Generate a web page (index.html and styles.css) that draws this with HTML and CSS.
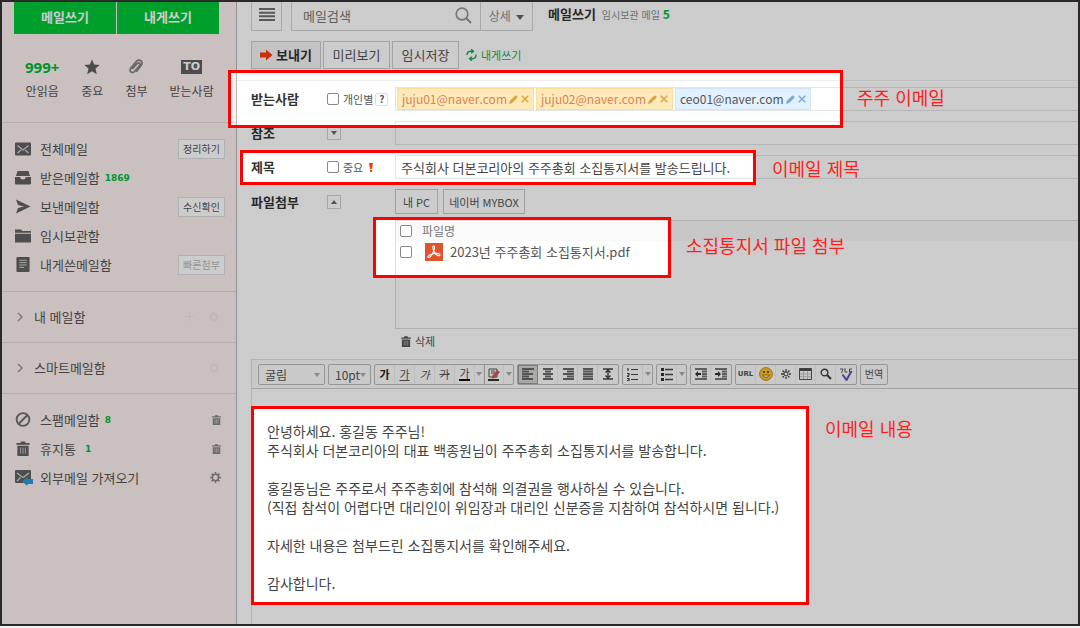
FILE: index.html
```html
<!DOCTYPE html>
<html lang="ko">
<head>
<meta charset="utf-8">
<title>메일쓰기</title>
<link rel="stylesheet" href="styles.css">
</head>
<body>
<svg class="defs" aria-hidden="true">
  <symbol id="trash" viewBox="0 0 14 16"><path d="M0 2h4.500V.5h5V2H14v2H0zM1 5h12v11H1z" fill="currentColor"/><path d="M4.500 7v6.500M7 7v6.500M9.500 7v6.500" stroke="#fff" stroke-opacity=".65" fill="none"/></symbol>
  <symbol id="pencil" viewBox="0 0 10 10"><path d="M0 10l1-3.500L6.500 1q1.200-1 2.400 0t0 2.500L3.500 9z" fill="currentColor"/></symbol>
  <symbol id="cross" viewBox="0 0 8 8"><path d="M.7.7l6.600 6.600M7.300.7L.7 7.300" stroke="currentColor" stroke-width="1.500"/></symbol>
  <symbol id="gear" viewBox="0 0 12 12"><circle cx="6" cy="6" r="3.500" fill="none" stroke="currentColor" stroke-width="1.800"/><path d="M6 0v2M6 10v2M0 6h2M10 6h2M1.800 1.800l1.400 1.400M8.800 8.800l1.400 1.400M1.800 10.200l1.400-1.400M8.800 3.200l1.400-1.400" stroke="currentColor" stroke-width="1.700"/></symbol>
</svg>
<div class="app">
  <aside class="sidebar">
    <div class="write">
      <button class="write-btn" type="button">메일쓰기</button>
      <button class="write-btn" type="button">내게쓰기</button>
    </div>
    <nav class="quick">
      <a href="#" class="quick-item"><b class="quick-num">999+</b><span>안읽음</span></a>
      <a href="#" class="quick-item"><svg width="16" height="16" viewBox="0 0 16 16"><path d="M8 .5l2.200 5 5.500.5-4.200 3.600 1.300 5.600L8 12.200l-4.800 3 1.300-5.600L.3 6l5.500-.5z" fill="#606060"/></svg><span>중요</span></a>
      <a href="#" class="quick-item"><svg width="14" height="16" viewBox="0 0 14 16"><path d="M3.200 10L8.300 4.500q1.300-1 2.200-.1t.1 2.100L5.500 12.500q-1.700 1.800-3.400.6t-.4-3.800L7.600 2.200q2.200-2 4.200-.4t.6 4.200L7.200 12.800" fill="none" stroke="#858585" stroke-width="1.800"/></svg><span>첨부</span></a>
      <a href="#" class="quick-item"><b class="to">TO</b><span>받는사람</span></a>
    </nav>
    <ul class="boxes">
      <li><svg class="ico" viewBox="0 0 16 14"><rect y="1" width="16" height="13" rx="1" fill="#626262"/><path d="M2.500 4L8 8.500 13.500 4M2.500 11.500l3.500-3M13.500 11.500L10 8.500" stroke="#fff" stroke-opacity=".75" fill="none" stroke-width="1.200"/></svg><a href="#">전체메일</a><button type="button" class="mini">정리하기</button></li>
      <li><svg class="ico" viewBox="0 0 16 14"><path d="M2.500.5h11L15 5.500H1zM0 6.500h5q.5 2.500 3 2.500t3-2.500h5V13q0 1-1 1H1q-1 0-1-1z" fill="#626262"/></svg><a href="#">받은메일함</a><b class="num">1869</b></li>
      <li><svg class="ico" viewBox="0 0 16 14"><path d="M1 0l14.500 7L1 14l2-5.500L9 7 3 5.500z" fill="#626262"/></svg><a href="#">보낸메일함</a><button type="button" class="mini">수신확인</button></li>
      <li><svg class="ico" viewBox="0 0 16 14"><path d="M0 1h6l1.500 1.500H16v1.800H0zM0 5.200h16V14H0z" fill="#626262"/></svg><a href="#">임시보관함</a></li>
      <li><svg class="ico" viewBox="0 0 16 16"><rect x="1" width="14" height="16" rx="1" fill="#626262"/><path d="M4 3.500h8M4 6h8M4 8.500h8M4 11h5" stroke="#fff" stroke-opacity=".75"/></svg><a href="#">내게쓴메일함</a><button type="button" class="mini" disabled>빠른첨부</button></li>
    </ul>
    <div class="group"><svg width="6" height="10" viewBox="0 0 6 10"><path d="M1 1l4 4-4 4" fill="none" stroke="#9c9c9c" stroke-width="1.500"/></svg><a href="#">내 메일함</a><span class="faint"><svg width="9" height="9" viewBox="0 0 9 9"><path d="M4.500 0v9M0 4.500h9" stroke="currentColor"/></svg><svg width="10" height="10"><use href="#gear"/></svg></span></div>
    <div class="group"><svg width="6" height="10" viewBox="0 0 6 10"><path d="M1 1l4 4-4 4" fill="none" stroke="#9c9c9c" stroke-width="1.500"/></svg><a href="#">스마트메일함</a><span class="faint"><svg width="10" height="10"><use href="#gear"/></svg></span></div>
    <ul class="boxes">
      <li><svg class="ico" viewBox="0 0 16 16"><circle cx="8" cy="8" r="6.800" fill="none" stroke="#707070" stroke-width="2"/><path d="M3.500 12.500l9-9" stroke="#707070" stroke-width="2"/></svg><a href="#">스팸메일함</a><b class="num">8</b><button type="button" class="act" aria-label="스팸메일함 비우기"><svg width="9" height="10"><use href="#trash"/></svg></button></li>
      <li><svg class="ico dark"><use href="#trash"/></svg><a href="#">휴지통</a><b class="num far">1</b><button type="button" class="act" aria-label="휴지통 비우기"><svg width="9" height="10"><use href="#trash"/></svg></button></li>
      <li><svg class="ico wide" viewBox="0 0 18 16"><rect x="0" y="0" width="16" height="13" rx="1" fill="#626262"/><path d="M2 3l6 4.500L14 3M2 11l3.500-3.500" stroke="#fff" stroke-opacity=".75" fill="none" stroke-width="1.200"/><path d="M7 11.500L12.500 6.500V9H18v5h-5.500v2z" fill="#2c9bde"/></svg><a href="#">외부메일 가져오기</a><button type="button" class="act" aria-label="설정"><svg width="11" height="11"><use href="#gear"/></svg></button></li>
    </ul>
  </aside>

  <main class="main">
    <header class="top">
      <button type="button" class="menu" aria-label="메뉴"><svg width="16" height="13" viewBox="0 0 16 13"><path d="M0 1h16M0 4.700h16M0 8.300h16M0 12h16" stroke="#707070" stroke-width="2"/></svg></button>
      <div class="search">
        <input type="search" class="search-input" placeholder="메일검색" aria-label="메일검색">
        <button type="button" class="search-go" aria-label="검색"><svg width="17" height="17" viewBox="0 0 17 17"><circle cx="7" cy="7" r="5.800" fill="none" stroke="#949494" stroke-width="1.700"/><path d="M11.300 11.300l4.700 4.700" stroke="#949494" stroke-width="2"/></svg></button>
        <button type="button" class="detail">상세 <i class="tri"></i></button>
      </div>
      <h1 class="title">메일쓰기</h1>
      <a href="#" class="draft">임시보관 메일 <b>5</b></a>
    </header>
    <div class="actions">
      <button type="button" class="btn send"><svg width="13" height="12" viewBox="0 0 13 12"><path d="M0 3.500h6V.5L12.500 6 6 11.500v-3H0z" fill="#ff3a10"/></svg>보내기</button>
      <button type="button" class="btn">미리보기</button>
      <button type="button" class="btn">임시저장</button>
      <a href="#" class="tome"><svg width="11" height="12" viewBox="0 0 11 12"><path d="M1 6q0-3.500 3.500-3.800H7M5.200.3L7.500 2.200 5.200 4.300M10 5.500q.3 4-3.500 4.300H4M5.800 7.700L3.500 9.800l2.300 2" fill="none" stroke="#1fae4b" stroke-width="1.400"/></svg>내게쓰기</a>
    </div>
    <form class="form">
      <div class="row">
        <b class="label">받는사람</b>
        <span class="opt"><input type="checkbox" class="check" id="each"><label for="each">개인별</label><button type="button" class="help" aria-label="도움말">?</button></span>
        <div class="field chips">
          <span class="chip">juju01@naver.com<svg width="9" height="9"><use href="#pencil"/></svg><svg width="8" height="8"><use href="#cross"/></svg></span>
          <span class="chip">juju02@naver.com<svg width="9" height="9"><use href="#pencil"/></svg><svg width="8" height="8"><use href="#cross"/></svg></span>
          <span class="chip blue">ceo01@naver.com<svg width="9" height="9"><use href="#pencil"/></svg><svg width="8" height="8"><use href="#cross"/></svg></span>
        </div>
      </div>
      <div class="row">
        <label class="label" for="cc">참조</label>
        <span class="opt"><button type="button" class="fold" aria-label="참조 펼치기"><i class="tri small"></i></button></span>
        <input type="text" class="field" id="cc">
      </div>
      <div class="row">
        <label class="label" for="subject">제목</label>
        <span class="opt"><input type="checkbox" class="check" id="urgent"><label for="urgent" class="urgent">중요 <svg width="4" height="9" viewBox="0 0 4 9"><path d="M0 0h4L3 6H1zM1 7h2v2H1z" fill="#ff3a10"/></svg></label></span>
        <input type="text" class="field" id="subject" value="주식회사 더본코리아의 주주총회 소집통지서를 발송드립니다.">
      </div>
      <div class="row">
        <b class="label">파일첨부</b>
        <span class="opt"><button type="button" class="fold" aria-label="파일첨부 접기"><i class="tri small up"></i></button></span>
        <div class="pick"><button type="button" class="btn file">내 PC</button><button type="button" class="btn file">네이버 MYBOX</button></div>
      </div>
    </form>
    <div class="files">
      <table class="table">
        <thead><tr><th class="c"><input type="checkbox" class="check" aria-label="전체 선택"></th><th>파일명</th></tr></thead>
        <tbody><tr><td class="c"><input type="checkbox" class="check" aria-label="파일 선택"></td><td><span class="doc"><svg width="18" height="18" viewBox="0 0 18 18"><rect width="18" height="18" fill="#e2522c"/><path d="M8.600 3q1.300 0 .9 2.500T7 11.500q-2 3.500-3.500 3t.5-2.200Q7 10.500 11 10.400t4 1.300-2.500.9Q10 11 8.800 8t-.8-4.400z" fill="none" stroke="#fff" stroke-width="1.100"/></svg>2023년 주주총회 소집통지서.pdf</span></td></tr></tbody>
      </table>
    </div>
    <button type="button" class="delete"><svg width="10" height="11"><use href="#trash"/></svg>삭제</button>

    <section class="editor">
      <div class="tools">
        <span class="sel font"><select aria-label="글꼴"><option>굴림</option></select></span>
        <span class="sel size"><select aria-label="크기"><option>10pt</option></select></span>
        <span class="set join">
          <button type="button"><b>가</b></button><button type="button"><u>가</u></button><button type="button"><em>가</em></button><button type="button"><s>가</s></button><button type="button"><span class="color">가</span></button><button type="button" class="drop" aria-label="글자색"><i class="tri pale"></i></button><button type="button" class="split" aria-label="배경색"><svg width="13" height="13" viewBox="0 0 13 13"><path d="M1 1h8v8H1zM3 3h4M3 5h4" fill="none" stroke="#555"/><path d="M4 8L9 2l3 2-5 6-3 .5z" fill="#ca5960"/><path d="M0 11h11v2H0z" fill="#333"/></svg></button><button type="button" class="drop" aria-label="배경색 선택"><i class="tri pale"></i></button>
        </span>
        <span class="set">
          <button type="button" class="on" aria-label="왼쪽 정렬"><svg width="12" height="12" viewBox="0 0 12 12"><path d="M0 1h12M0 3.500h7M0 6h11M0 8.500h7M0 11h11" stroke="#6a6a6a" stroke-width="2"/></svg></button><button type="button" aria-label="가운데 정렬"><svg width="12" height="12" viewBox="0 0 12 12"><path d="M1 1h10M3 3.500h6M1 6h10M3 8.500h6M1 11h10" stroke="#6a6a6a" stroke-width="2"/></svg></button><button type="button" aria-label="오른쪽 정렬"><svg width="12" height="12" viewBox="0 0 12 12"><path d="M1 1h11M5 3.500h7M1 6h11M5 8.500h7M1 11h11" stroke="#6a6a6a" stroke-width="2"/></svg></button><button type="button" aria-label="양쪽 정렬"><svg width="12" height="12" viewBox="0 0 12 12"><path d="M1 1h10M1 3.500h10M1 6h10M1 8.500h10M1 11h10" stroke="#6a6a6a" stroke-width="2.200"/></svg></button><button type="button" aria-label="줄 간격"><svg width="10" height="12" viewBox="0 0 10 12"><path d="M0 1h10M0 11h10M5 2v8M2.500 4.500L5 2l2.500 2.500M2.500 7.500L5 10l2.500-2.500" fill="none" stroke="#444" stroke-width="1.400"/></svg></button>
        </span>
        <span class="set">
          <button type="button" aria-label="번호 목록"><svg width="12" height="13" viewBox="0 0 12 13"><path d="M1 0v3M0 5.500h2V7L0 8.500h2M0 10.500h2v2H0M4 1.500h7M4 6.500h7M4 11.500h7" fill="none" stroke="#444" stroke-width="1.200"/></svg></button><button type="button" class="drop" aria-label="번호 모양"><i class="tri pale"></i></button>
        </span>
        <span class="set">
          <button type="button" aria-label="글머리 목록"><svg width="12" height="13" viewBox="0 0 12 13"><path d="M0 1.500h3M0 6.500h3M0 11.500h3" stroke="#333" stroke-width="3"/><path d="M4 1.500h8M4 6.500h8M4 11.500h8" stroke="#444" stroke-width="1.300"/></svg></button><button type="button" class="drop" aria-label="글머리 모양"><i class="tri pale"></i></button>
        </span>
        <span class="set">
          <button type="button" aria-label="내어쓰기"><svg width="12" height="12" viewBox="0 0 12 12"><path d="M0 1h12M7 3.500h5M7 6h5M7 8.500h5M0 11h12" stroke="#777" stroke-width="2.100"/><path d="M0 6l3-3v2h3v2H3v2z" fill="#333"/></svg></button><button type="button" aria-label="들여쓰기"><svg width="12" height="12" viewBox="0 0 12 12"><path d="M0 1h12M7 3.500h5M7 6h5M7 8.500h5M0 11h12" stroke="#777" stroke-width="2.100"/><path d="M6 6L3 3v2H0v2h3v2z" fill="#333"/></svg></button>
        </span>
        <span class="set">
          <button type="button" class="url">URL</button><button type="button" aria-label="이모티콘"><svg width="14" height="14" viewBox="0 0 14 14"><circle cx="7" cy="7" r="6.400" fill="#fbc52c" stroke="#c98a10"/><path d="M3.500 8q3.500 5 7 0z" fill="#fff" stroke="#8a5c00" stroke-width=".8"/><circle cx="5" cy="5" r="1" fill="#5a3c00"/><circle cx="9" cy="5" r="1" fill="#5a3c00"/></svg></button><button type="button" aria-label="특수기호"><svg width="12" height="12" viewBox="0 0 12 12"><path d="M6 1v10M1 6h10M2.500 2.500l7 7M9.500 2.500l-7 7" stroke="#444" stroke-width="1.300" stroke-dasharray="3 1"/><circle cx="6" cy="6" r="2" fill="#fff" stroke="#444"/></svg></button><button type="button" aria-label="표"><svg width="13" height="12" viewBox="0 0 13 12"><path d="M.5 6h12M.5 8.700h12M4.500 3v8M8.500 3v8" fill="none" stroke="#c4c4c4"/><path d="M.5 1.700h12" stroke="#444" stroke-width="2.400"/><path d="M.5.5h12v11H.5z" fill="none" stroke="#555"/></svg></button><button type="button" aria-label="찾기"><svg width="12" height="12" viewBox="0 0 12 12"><circle cx="4.500" cy="4.500" r="3.300" fill="none" stroke="#444" stroke-width="1.400"/><path d="M7 7l4 4" stroke="#444" stroke-width="2.200"/></svg></button><button type="button" aria-label="맞춤법 검사"><svg width="13" height="13" viewBox="0 0 13 13"><path d="M0 1h3L1.500 5M5 0v4h2.500M12 1H9.500v3H12" fill="none" stroke="#555"/><path d="M2.500 6.500L6.500 12 11.500 3" fill="none" stroke="#5757b8" stroke-width="2"/></svg></button>
        </span>
        <span class="set"><button type="button" class="trans">번역</button></span>
      </div>
      <textarea class="body" aria-label="본문">안녕하세요. 홍길동 주주님!
주식회사 더본코리아의 대표 백종원님이 주주총회 소집통지서를 발송합니다.

홍길동님은 주주로서 주주총회에 참석해 의결권을 행사하실 수 있습니다.
(직접 참석이 어렵다면 대리인이 위임장과 대리인 신분증을 지참하여 참석하시면 됩니다.)

자세한 내용은 첨부드린 소집통지서를 확인해주세요.

감사합니다.</textarea>
    </section>
  </main>

  <svg class="guide" aria-hidden="true">
    <defs>
      <mask id="holes">
        <rect width="100%" height="100%" fill="#fff"/>
        <g fill="#000">
          <rect x="228" y="70" width="614" height="57"/>
          <rect x="240" y="151" width="515" height="33"/>
          <rect x="373" y="217" width="297" height="60"/>
          <rect x="251" y="406" width="557" height="198"/>
        </g>
      </mask>
    </defs>
    <rect width="100%" height="100%" fill="#000" fill-opacity=".2" mask="url(#holes)"/>
    <g fill="none" stroke="#ff0000" stroke-width="3">
      <rect x="229.500" y="71.500" width="612" height="55"/>
      <rect x="241.500" y="151.500" width="513" height="32"/>
      <rect x="374.500" y="218.500" width="295" height="58"/>
      <rect x="252.500" y="407.500" width="555" height="196"/>
    </g>
  </svg>
  <span class="note note-to">주주 이메일</span>
  <span class="note note-subject">이메일 제목</span>
  <span class="note note-file">소집통지서 파일 첨부</span>
  <span class="note note-body">이메일 내용</span>
</div>
</body>
</html>
```
FILE: styles.css
```css
* { box-sizing: border-box; }
body {
  margin: 0;
  background: #f4f4f4;
  color: #555;
  font: 13px/20px "Noto Sans CJK KR", sans-serif;
}
button, input, select, textarea { font: inherit; color: inherit; margin: 0; padding: 0; border-radius: 0; }
button { background: none; border: 0; }
a { color: inherit; text-decoration: none; }
ul { list-style: none; margin: 0; padding: 0; }
svg { flex: none; }
.defs { position: absolute; width: 0; height: 0; }

.app { position: relative; display: flex; min-height: calc(100vh - 2px); background: #fff; }
.app::after { content: ""; position: absolute; inset: 0; border: 2px solid #2b2829; pointer-events: none; }

/* Sidebar */
.sidebar { width: 237px; flex: none; padding-left: 2px; background: #fdf0ef; border-right: 1px solid #b8b8b8; }
.write { display: flex; gap: 1px; padding: 2px 17px 0 12px; }
.write-btn { flex: 1; height: 32px; padding-bottom: 2px; background: #00c738; color: #fff; font-weight: 700; }
.quick { display: flex; gap: 22px; height: 89px; padding: 24px 0 0 23px; font-size: 12px; border-bottom: 1px solid #e4dad9; }
.quick-item { display: flex; flex-direction: column; align-items: center; gap: 5px; white-space: nowrap; }
.quick-item > :first-child { height: 18px; display: flex; align-items: center; }
.quick-num { color: #00b83a; font: 700 15px/20px "Noto Sans", sans-serif; }
.quick-item .to { height: 14px; margin: 2px 0; padding: 0 2px; background: #606060; color: #fff; font: 700 11px/14px "DejaVu Sans", sans-serif; }
.boxes { padding: 11px 11px 12px 13px; }
.boxes li { display: flex; align-items: center; height: 29px; }
.ico { width: 16px; height: 15px; margin-right: 9px; }
.ico.wide { width: 18px; height: 16px; margin-right: 7px; }
.ico.dark { color: #626262; }
.num { margin-left: 5px; color: #00b83a; font: 700 9px/20px "DejaVu Sans", sans-serif; }
.num.far { margin-left: 9px; }
.mini { width: 47px; height: 20px; margin-left: auto; background: #fff; border: 1px solid #dcdfe2; font-size: 10px; line-height: 16px; white-space: nowrap; }
.mini:disabled { color: #bbb; }
.act { display: flex; margin-left: auto; margin-right: 4px; color: #888; }
.group { display: flex; align-items: center; gap: 11px; height: 51px; padding: 0 17px 0 15px; border-top: 1px solid #e4dad9; }
.group + .boxes { border-top: 1px solid #e4dad9; }
.faint { display: flex; gap: 15px; margin-left: auto; color: #f1e5e4; }

/* Header */
.main { flex: 1; min-width: 0; display: flex; flex-direction: column; padding-right: 2px; }
.top { display: flex; align-items: flex-start; height: 31px; padding-left: 14px; }
.menu { width: 31px; height: 31px; border: 1px solid #d4d4d4; }
.search { display: flex; width: 242px; height: 31px; margin-left: 9px; border: 1px solid #d4d4d4; }
.search-input { flex: 1; min-width: 0; padding-left: 11px; border: 0; outline: 0; background: none; }
.search-input::placeholder { color: #777; opacity: 1; }
.search-go { width: 33px; }
.search svg { display: block; margin: auto; }
.detail { width: 52px; border-left: 1px solid #d4d4d4; color: #8c8c8c; font-size: 12px; }
.tri { display: inline-block; margin-left: 2px; border: 4px solid transparent; border-top: 5px solid #666; border-bottom: 0; vertical-align: middle; }
.tri.small { margin: 0; border-width: 4px 3px 0; }
.tri.up { transform: rotate(180deg); }
.tri.pale { margin: 0; border-width: 4px 3px 0; border-top-color: #aaa; }
.title { margin: 4px 0 0 15px; color: #333; font-size: 13px; line-height: 20px; }
.draft { margin: 4px 0 0 6px; color: #8c8c8c; font-size: 10px; }
.draft b { color: #00b83a; font-size: 12px; }
.actions { display: flex; align-items: center; gap: 2px; height: 50px; padding: 10px 0 12px 14px; border-bottom: 1px solid #eee; }
.btn { width: 67px; height: 28px; border: 1px solid #ccc; line-height: 24px; white-space: nowrap; color: #555; }
.send { display: flex; align-items: center; justify-content: center; gap: 3px; width: 70px; background: #f4f4f4; color: #333; font-weight: 700; }
.tome { display: flex; align-items: center; gap: 4px; margin-left: 5px; color: #1fae4b; font-size: 11px; }

/* Form rows */
.form { display: grid; gap: 10px; padding: 6px 0 0 14px; }
.row { display: grid; grid-template-columns: 76px 68px 1fr; height: 24px; align-items: center; }
.label { color: #333; font-weight: 700; }
.opt { display: flex; align-items: center; gap: 4px; font-size: 11px; white-space: nowrap; }
.check { appearance: none; width: 12px; height: 12px; flex: none; background: #fff; border: 1px solid #888; border-radius: 2px; }
.urgent svg { margin-left: 3px; }
.help { width: 13px; height: 13px; margin-left: -2px; border: 1px solid #ddd; border-radius: 2px; font-size: 10px; line-height: 10px; font-weight: 700; }
.fold { display: flex; align-items: center; justify-content: center; width: 14px; height: 14px; border: 1px solid #d0d0d0; }
.field { width: 100%; height: 24px; padding: 0 5px; border: 1px solid #e4e4e4; border-right: 0; background: none; color: #444; outline: 0; }
.chips { display: flex; align-items: center; gap: 2px; padding: 0 1px; }
.chip { display: flex; align-items: center; gap: 2px; height: 22px; padding: 0 4px; border: 1px solid #fbdd9c; background: #ffe9b8; color: #d98354; font-size: 12px; white-space: nowrap; }
.chip svg { color: #dba544; }
.chip svg:last-child { margin-left: 1px; }
.chip.blue { background: #e2f1ff; border-color: #cfe6fa; color: #555; }
.chip.blue svg { color: #80a8dc; }
.pick { display: flex; gap: 5px; }
.file { width: 43px; height: 25px; font-size: 11px; line-height: 20px; }
.file + .file { width: 82px; }
.files { height: 109px; margin: 7px 0 0 158px; border: 1px solid #ddd; border-right: 0; }
.table { width: 100%; border-collapse: collapse; }
.table th, .table td { padding: 0; text-align: left; font-weight: 400; }
.table th { height: 20px; background: #f9f9f9; font-size: 12px; line-height: 18px; color: #777; }
.table td { height: 22px; }
.table .c { width: 26px; padding-left: 4px; }
.table .check { display: block; }
.doc { display: flex; align-items: center; gap: 7px; padding-left: 3px; }
.delete { display: flex; align-items: center; gap: 4px; align-self: flex-start; height: 24px; margin: 0 0 6px 164px; font-size: 11px; }

/* Editor */
.editor { flex: 1; display: flex; flex-direction: column; margin-left: 14px; border-left: 1px solid #e0e0e0; }
.tools { display: flex; align-items: center; gap: 3px; height: 30px; padding-left: 6px; border: solid #e0e0e0; border-width: 1px 0; border-bottom-color: #ccc; background: #fcfcfc; }
.sel { position: relative; height: 21px; border: 1px solid #bbb; border-radius: 2px; }
.sel::after { content: ""; position: absolute; right: 4px; top: 8px; border: 3px solid transparent; border-top: 4px solid #aaa; border-bottom: 0; pointer-events: none; }
.sel select { display: block; width: 100%; height: 19px; padding-left: 6px; appearance: none; border: 0; background: none; font-size: 12px; line-height: 19px; }
.font { width: 67px; }
.size { width: 43px; }
.set { display: flex; height: 21px; border: 1px solid #bbb; border-radius: 2px; }
.set button { display: flex; align-items: center; justify-content: center; width: 20px; height: 19px; border-right: 1px solid #eee; font-size: 11px; line-height: 16px; }
.set button:last-child { border-right: 0; }
.set .drop { width: 9px; }
.set .split { border-left: 1px solid #bbb; }
.set .on { background: #d4d4d0; border: 1px solid #999; }
.set b { color: #222; }
.set .url { font: 700 7px/16px "DejaVu Sans", sans-serif; }
.set .trans { width: 26px; font-size: 10px; }
.color { height: 14px; border-bottom: 2px solid #111; line-height: 12px; }
.body { flex: 1; min-height: 220px; width: 100%; padding: 33px 15px 20px; border: 0; outline: 0; resize: none; background: none; color: #444; font-size: 14px; line-height: 19px; }

/* Annotation layer */
.guide { position: absolute; inset: 0; width: 100%; height: 100%; pointer-events: none; }
.note { position: absolute; color: #ff1f1f; font-size: 18px; line-height: 28px; white-space: nowrap; }
.note-to { left: 857px; top: 83px; }
.note-subject { left: 772px; top: 154px; }
.note-file { left: 686px; top: 231px; }
.note-body { left: 825px; top: 414px; }
```
